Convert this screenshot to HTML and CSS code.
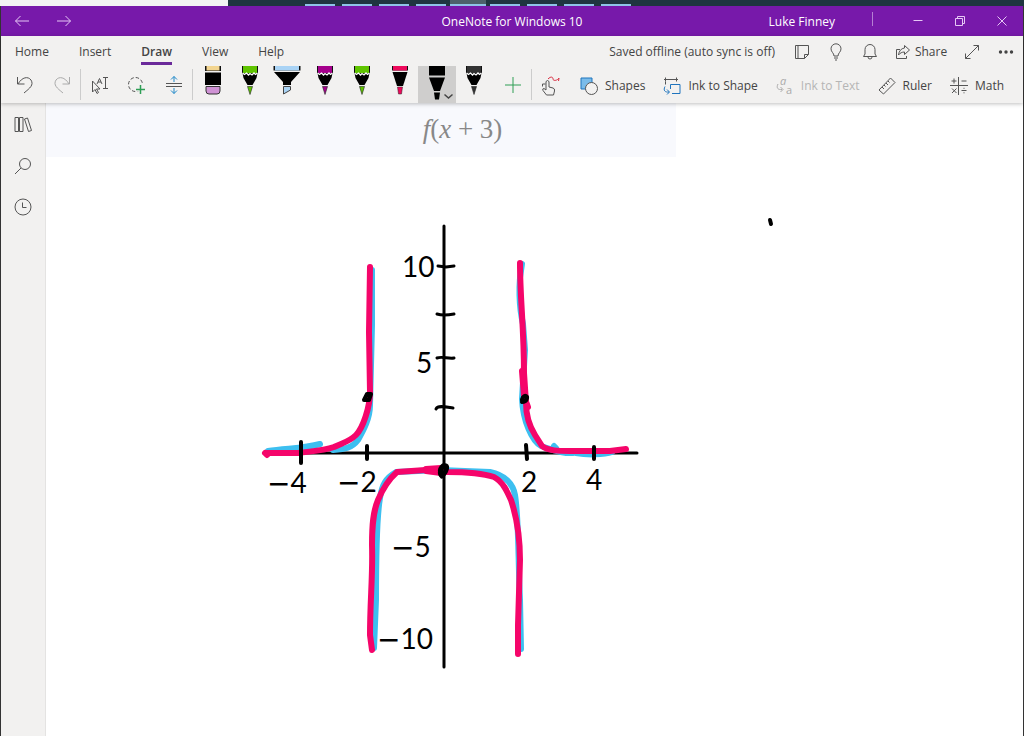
FILE: index.html
```html
<!DOCTYPE html>
<html lang="en">
<head>
    <meta charset="UTF-8">
    <meta name="viewport" content="width=device-width, initial-scale=1.0">
    <title>OneNote for Windows 10</title>
    <link rel="stylesheet" href="styles.css">
</head>
<body>

<!-- pen shapes shared by the toolbar -->
<svg class="defs" width="0" height="0" aria-hidden="true">
  <symbol id="pencil" viewBox="0 0 24 36">
    <path d="M4 0h16v7l-2 2H6L4 7z" fill="#111"/>
    <path d="M5 0h14v7H5z" fill="currentColor"/>
    <path d="M4.500 7l2 1.500 2-1.500 2 2 1.500-1.500 2 1.500 2-2 1.500 1.500 2-1.500-1 5L14.500 19h-5L5.500 12z" fill="#000"/>
    <path d="M4.500 7l2 1.500 2-1.500 2 2 1.500-1.500 2 1.500 2-2 1.500 1.500 2-1.500" fill="none" stroke="#fff" stroke-width="1.300"/>
    <path d="M9.500 20.500h5L12 28.500z" fill="currentColor" stroke="#222" stroke-width=".6"/>
  </symbol>
  <symbol id="marker" viewBox="0 0 24 36">
    <path d="M4 0h16v4.500H4z" fill="#111"/>
    <path d="M5 0h14v4.500H5z" fill="currentColor"/>
    <path d="M4.500 6h15L15 20H9z" fill="#000"/>
    <path d="M9.500 21h5l-1 7h-3z" fill="currentColor" stroke="#222" stroke-width=".5"/>
  </symbol>
</svg>

<div class="desktop">
  <div class="taskbar">
    <span></span><span></span><span></span><span></span><span class="active"></span><span></span><span></span><span></span><span></span>
  </div>
</div>

<div class="window">

  <header class="titlebar">
    <div class="history">
      <button aria-label="Back"><svg width="16" height="12" viewBox="0 0 16 12"><path d="M15 6H1.500M6.500 1l-5 5 5 5"/></svg></button>
      <button aria-label="Forward"><svg width="16" height="12" viewBox="0 0 16 12"><path d="M1 6h13.500M9.500 1l5 5-5 5"/></svg></button>
    </div>
    <h1>OneNote for Windows 10</h1>
    <div class="controls">
      <span class="user">Luke Finney</span>
      <button aria-label="Minimize"><svg width="12" height="12" viewBox="0 0 12 12"><path d="M1.500 5.500h9"/></svg></button>
      <button aria-label="Restore"><svg width="12" height="12" viewBox="0 0 12 12"><path d="M1.500 3.500h7v7h-7zM3.500 3.500v-2h7v7h-2"/></svg></button>
      <button aria-label="Close"><svg width="12" height="12" viewBox="0 0 12 12"><path d="M1.500 1.500l9 9M10.500 1.500l-9 9"/></svg></button>
    </div>
  </header>

  <div class="ribbon">
    <div class="menubar">
      <nav class="tabs">
        <a href="#">Home</a>
        <a href="#">Insert</a>
        <a href="#" class="current">Draw</a>
        <a href="#">View</a>
        <a href="#">Help</a>
      </nav>
      <div class="status">
        <span class="sync">Saved offline (auto sync is off)</span>
        <button aria-label="Notes"><svg width="16" height="16" viewBox="0 0 16 16"><path d="M1.500 1.500h13v9l-4 4h-9zM4 1.500v13M14.500 10.500h-4v4"/></svg></button>
        <button aria-label="Tips"><svg width="16" height="18" viewBox="0 0 16 18"><path d="M6 13c0-3-3-4-3-7.200a5 5 0 0 1 10 0C13 9 10 10 10 13zM6 15h4M7 17h2"/></svg></button>
        <button aria-label="Notifications"><svg width="16" height="18" viewBox="0 0 16 18"><path d="M1.500 13.500h13L13 11V6.500a5 5 0 0 0-10 0V11zM6 14a2 2 0 0 0 4 0"/></svg></button>
        <button class="share"><svg width="16" height="16" viewBox="0 0 16 16"><path d="M5 5.500H1.500v9h10V12M9.500 1.500L14.500 6l-5 4.500V8C7 8 5 9 3.500 11 4 7 6 4.500 9.500 4z"/></svg>Share</button>
        <button aria-label="Full screen"><svg width="16" height="16" viewBox="0 0 16 16"><path d="M1.500 14.500l13-13M9.500 1.500h5v5M1.500 9.500v5h5"/></svg></button>
        <button aria-label="More"><svg width="16" height="16" viewBox="0 0 16 16"><g fill="#444" stroke="none"><circle cx="2.500" cy="8" r="1.700"/><circle cx="8" cy="8" r="1.700"/><circle cx="13.500" cy="8" r="1.700"/></g></svg></button>
      </div>
    </div>

    <div class="toolbar">
      <div class="group">
        <button aria-label="Undo"><svg width="18" height="20" viewBox="0 0 18 20"><path d="M1.500 2v7h7M2 9C6 2 12 1 15 5c3 5-1 8-7 13"/></svg></button>
        <button class="off" aria-label="Redo"><svg width="18" height="20" viewBox="0 0 18 20"><path d="M16.500 2v7h-7M16 9C12 2 6 1 3 5c-3 5 1 8 7 13"/></svg></button>
      </div>
      <div class="group">
        <button aria-label="Select text"><svg width="20" height="20" viewBox="0 0 20 20"><path d="M2.500 6v11l2.500-2.500 2 4 1.500-1-2-3.500H10zM7 9l2.500-5.500L12 9M8 7h3M13 2.500h5M15.500 2.500v11M13 13.500h5"/></svg></button>
        <button aria-label="Lasso select"><svg width="20" height="20" viewBox="0 0 20 20"><circle cx="8.500" cy="9.500" r="7" stroke-dasharray="3.500 2"/><path d="M8 14.500h10M14 9v10" stroke="#f2f1f0" stroke-width="4"/><path d="M9 14.500h9M13.500 10v9" stroke="#2f9e55" stroke-width="1.500"/></svg></button>
        <button aria-label="Insert space"><svg width="18" height="20" viewBox="0 0 18 20"><path d="M1 8.500h16M1 11.500h16"/><path d="M9 7V1.500M6 4.500l3-3 3 3M9 13v5.500M6 15.500l3 3 3-3" stroke="#1e88c9"/></svg></button>
      </div>
      <div class="group pens">
        <button aria-label="Eraser"><svg width="24" height="36" viewBox="0 0 24 36"><path d="M4 0h16v5H4z" fill="#111"/><path d="M5.500 0h13v4.500h-13z" fill="#f3d590"/><path d="M4 6.500h16V19H4z" fill="#000"/><path d="M5 20.500h14V25q0 3-3 3H8q-3 0-3-3z" fill="#cf92d4" stroke="#333"/></svg></button>
        <button class="green" aria-label="Green pencil"><svg width="24" height="36"><use href="#pencil"/></svg></button>
        <button aria-label="Highlighter"><svg width="28" height="36" viewBox="0 0 28 36"><path d="M.5 0h27v4.500H.5z" fill="#111"/><path d="M2 0h24v4.500H2z" fill="#a9d3f5"/><path d="M1 6h26l-9 10v3h-8v-3z" fill="#000"/><path d="M10.500 20.500h7V24l-7 4z" fill="#a9d3f5" stroke="#444"/></svg></button>
        <button class="purple" aria-label="Purple pencil"><svg width="24" height="36"><use href="#pencil"/></svg></button>
        <button class="green" aria-label="Light green pencil"><svg width="24" height="36"><use href="#pencil"/></svg></button>
        <button class="pink" aria-label="Pink pen"><svg width="24" height="36"><use href="#marker"/></svg></button>
        <button class="selected" aria-label="Black pen"><svg width="36" height="37" viewBox="0 0 36 37"><path d="M10 0h16v9.500H10zM10 11.500h16L21 25h-6zM15 26.500h6l-1 7h-4z" fill="#000"/><path d="M25.500 28.500l4 3.500 4-3.500" class="line"/></svg></button>
        <button class="dark" aria-label="Black pencil"><svg width="24" height="36"><use href="#pencil"/></svg></button>
      </div>
      <div class="group">
        <button aria-label="Add pen"><svg width="18" height="18" viewBox="0 0 18 18"><path d="M1 9h16M9 1v16" stroke="#2f9e55"/></svg></button>
      </div>
      <div class="group commands">
        <button aria-label="Draw with mouse or touch"><svg width="20" height="22" viewBox="0 0 20 22"><path d="M5 15V6.500q1.500-2 3 0V12l4 1q2 .5 1.500 3l-1 4H5.500L2 15.500q-1-2 1-2zM4.500 9h-3v2.500"/><path d="M7 4c3-3 5-2 5 0s4 2 6-1l-.5 3" stroke="#d92b3f"/></svg></button>
        <button><svg width="18" height="18" viewBox="0 0 18 18"><path d="M1 1h11v11H1z" fill="#7bbcea" stroke="#1f74bd"/><circle cx="11.500" cy="11.500" r="6" fill="#f2f1f0"/></svg>Shapes</button>
        <button><svg width="18" height="18" viewBox="0 0 18 18"><path d="M1 2.500h14M2.500.5v4M13.500.5v4M2.500 4.500v3"/><path d="M2 9.500c-2 4 0 6 4 5.500M4 12.500l2.500 2.500L4 17.500M9 16.500h8v-9H7.500V12" stroke="#1f74bd"/></svg>Ink to Shape</button>
        <button class="off" disabled><svg class="ink-text" width="18" height="24" viewBox="0 0 18 24"><text x="4" y="11" class="ink-a">a</text><text x="10" y="20" class="ink-b">a</text><path d="M2 10c-2 4 0 6 4 5.500M4.500 13l2.500 2.500L4.500 18"/></svg>Ink to Text</button>
        <button><svg width="18" height="18" viewBox="0 0 18 18"><path d="M1 13L12.500 1 17 5.500 5.500 17zM4 10l2 2M6 8l1.500 1.500M8 6l2 2M10 4l1.500 1.500"/></svg>Ruler</button>
        <button><svg width="18" height="18" viewBox="0 0 18 18"><path d="M8.500 0v18M0 8.500h18M1.500 4h5M4 1.500v5M11.500 4h5M2 11.500l4.500 4.500M6.500 11.500L2 16M11.500 13.500h5M14 10.800v1M14 15.300v1"/></svg>Math</button>
      </div>
    </div>
  </div>

  <div class="content">
    <aside class="sidebar">
      <button aria-label="Notebooks"><svg width="18" height="18" viewBox="0 0 18 18"><path d="M1 1.500h3.500v14H1zM5.500 1.500H9v14H5.500zM10.500 3l3-1L17.500 14.500l-3 1z"/></svg></button>
      <button aria-label="Search"><svg width="18" height="18" viewBox="0 0 18 18"><circle cx="11" cy="7" r="5.500"/><path d="M7 11l-6 6"/></svg></button>
      <button aria-label="Recent"><svg width="18" height="18" viewBox="0 0 18 18"><circle cx="9" cy="9" r="8"/><path d="M8.500 4.500v5h4"/></svg></button>
    </aside>

    <main class="page">
      <div class="formula"><i>f</i>(<i>x</i> + 3)</div>

      <svg class="ink" width="977" height="579" viewBox="46 157 977 579" role="img" aria-label="Graph of the function">
        <!-- axes -->
        <g class="axis">
          <path d="M444 226V667M266 453L637 453"/>
          <path d="M438 266l8 1 8-1M437 314c6 2 12 1 17 0M437 358c5-2 11 1 17 0M436 409c2-4 10-2 17-1"/>
        </g>
        <!-- labels -->
        <g class="labels">
          <text x="402" y="277">10</text>
          <text x="416" y="373">5</text>
          <text x="267" y="493"><tspan class="minus">−</tspan>4</text>
          <text x="337" y="492"><tspan class="minus">−</tspan>2</text>
          <text x="521" y="492">2</text>
          <text x="586" y="490">4</text>
          <text x="391" y="557"><tspan class="minus">−</tspan>5</text>
          <text x="377" y="649"><tspan class="minus">−</tspan>10</text>
        </g>
        <!-- first curve -->
        <g class="blue">
          <path d="M372 270L372 325L370 405C370 419 363 431 358 440C352 448 345 449 333 450"/>
          <path d="M268 451C285 448 303 449 320 444"/>
          <path d="M522 264C518 284 519 307 523 324L525 350L522 399C523 421 532 441 541 446C551 449 561 454 573 453M554 446L556 448M576 453C586 455 604 455 612 452"/>
          <path d="M374 648L376 600C376 550 377 515 380 498C382 484 386 478 396 472L440 470L490 472C505 475 513 484 515 495C519 520 518 560 520 600L521 649"/>
        </g>
        <!-- second curve -->
        <g class="pink-ink">
          <path d="M370 267L369 332L370 392C370 407 363 428 356 435C349 442 342 443 334 447C322 451 312 451 298 453H267M265 453L267 455"/>
          <path d="M520 263C520 298 524 328 524 373L526 403C526 415 530 427 535 435L542 446C548 451 559 451 570 451H610L626 449"/>
          <path d="M522 371L524 396L528 407"/>
          <path d="M372 650L370 635C370 600 373 575 372 545C372 525 373 512 378 500C383 488 388 480 397 472L440 469L447 472C465 472 485 474 494 477C503 482 507 491 511 500C517 518 520 535 520 560L518 625L518 654"/>
          <path d="M426 469l15-1M426 471l15 2"/>
        </g>
        <!-- marks over the curves -->
        <g class="mark">
          <path d="M301 442v21M367 446v13M526 445l1 14M594 447v12"/>
          <path d="M364 400l3-6 4 0-2 6z"/>
          <path d="M522 402c-1-3 2-7 4-6s1 6-4 6"/>
          <path d="M443 466c-4 3-3 12 0 9s6-11 1-9-4 7-2 10" class="knot"/>
          <path d="M770 220l1 4"/>
        </g>
      </svg>
    </main>
  </div>

</div>

</body>
</html>
```
FILE: styles.css
```css
* {
  box-sizing: border-box;
}

html, body {
  height: 100%;
}

body {
  margin: 0;
  display: flex;
  flex-direction: column;
  overflow: hidden;
  font: 12px/16px "Open Sans", "Noto Sans", sans-serif;
  color: #444;
  background: #fff;
}

h1 {
  margin: 0;
  padding-top: 2px;
  font: inherit;
}

button {
  display: flex;
  align-items: center;
  justify-content: center;
  padding: 0;
  border: 0;
  background: none;
  font: inherit;
  color: inherit;
}

a {
  color: inherit;
  text-decoration: none;
}

svg {
  flex: none;
  fill: none;
  stroke: #555;
}

.defs {
  position: absolute;
}

/* strip of the desktop above the window */
.desktop {
  flex: none;
  height: 6px;
  padding-left: 228px;
  background: #f3f3f3;
}

.taskbar {
  display: flex;
  gap: 7px;
  height: 6px;
  padding-left: 77px;
  background: #1f3540;
}

.taskbar span {
  width: 30px;
  border-bottom: 2px solid #8fc4e8;
}

.taskbar .active {
  width: 36px;
  margin: 0 -3px;
  background: #4d616b;
}

.window {
  flex: 1;
  min-height: 0;
  display: flex;
  flex-direction: column;
  border: solid #333;
  border-width: 0 1px;
}

/* title bar */
.titlebar {
  flex: none;
  display: grid;
  grid-template-columns: 1fr auto 1fr;
  align-items: center;
  height: 30px;
  color: #fff;
  background: #7719aa;
}

.titlebar svg {
  stroke: #e6c8f5;
}

.history,
.controls {
  display: flex;
  align-items: center;
}

.history button,
.controls button {
  width: 42px;
  height: 30px;
}

.controls {
  justify-content: flex-end;
}

.user {
  margin-right: 24px;
  padding-top: 2px;
  padding-right: 38px;
  background: linear-gradient(#b57fd3, #b57fd3) right top / 1px 14px no-repeat;
}

/* ribbon */
.ribbon {
  flex: none;
  position: relative;
  background: #f2f1f0;
  box-shadow: 0 1px 4px rgba(0, 0, 0, 0.25);
}

.menubar {
  display: flex;
  justify-content: space-between;
  height: 30px;
}

.tabs {
  display: flex;
  gap: 30px;
  padding-left: 14px;
}

.tabs a {
  height: 29px;
  padding-top: 8px;
}

.tabs .current {
  font-weight: 600;
  border-bottom: 3px solid #6b2a9a;
}

.status {
  display: flex;
  align-items: center;
  padding-top: 1px;
}

.status button {
  width: 34px;
  height: 29px;
}

.sync {
  margin-right: 10px;
}

.status .share {
  gap: 4px;
  width: 68px;
}

/* drawing tools */
.toolbar {
  display: flex;
  height: 37px;
  padding-left: 5px;
}

.group {
  display: flex;
}

/* thin divider that stops short of the ribbon's edge */
.group + .group {
  padding-left: 1px;
  background: linear-gradient(#ccc, #ccc) left center / 1px 31px no-repeat;
}

.group button {
  width: 37px;
  height: 37px;
}

.group.pens {
  width: 301px;
  padding-left: 2px;
}

.pens button {
  flex: 1;
  align-items: flex-start;
}

.pens svg {
  stroke: none;
}

.pens .line {
  stroke: #444;
  stroke-width: 1.5;
}

.pens + .group {
  background: none;
}

.pens .selected {
  background: #cfcecd;
}

.green {
  color: #5fc400;
}

.purple {
  color: #a5008c;
}

.pink {
  color: #ee0a5c;
}

.dark {
  color: #333;
}

.commands {
  gap: 18px;
}

.commands button {
  gap: 7px;
  width: auto;
  padding-top: 2px;
}

.commands button:first-child {
  width: 30px;
  padding-left: 8px;
}

.off {
  color: #b5b5b5;
}

.off svg {
  stroke: #aaa;
}

.ink-text {
  overflow: visible;
}

.ink-a,
.ink-b {
  font-size: 11px;
  fill: #aaa;
  stroke: none;
}

.ink-a {
  font-style: italic;
}

/* notebook */
.content {
  flex: 1;
  min-height: 0;
  display: flex;
}

.sidebar {
  flex: none;
  width: 45px;
  padding-top: 1px;
  background: #f2f1f0;
  border-right: 1px solid #e4e3e2;
}

.sidebar button {
  width: 44px;
  height: 41px;
}

.page {
  flex: 1;
  min-width: 0;
  overflow: hidden;
}

.formula {
  width: 630px;
  max-width: 100%;
  height: 54px;
  padding-left: 203px;
  padding-top: 10px;
  text-align: center;
  font: 27px/32px "Liberation Serif", serif;
  color: #888;
  background: #f8f9fd;
}

.ink {
  display: block;
  stroke-linecap: round;
  stroke-linejoin: round;
}

.axis {
  stroke: #000;
  stroke-width: 3;
}

.blue {
  stroke: #3dbff0;
  stroke-width: 6;
}

.pink-ink {
  stroke: #f5056a;
  stroke-width: 6;
}

.mark {
  stroke: #000;
  stroke-width: 4;
}

.mark .knot {
  stroke-width: 5;
}

.labels {
  font: 28px Lato, sans-serif;
  fill: #000;
  stroke: none;
}

.minus {
  font-family: "DejaVu Sans", sans-serif;
}
```
